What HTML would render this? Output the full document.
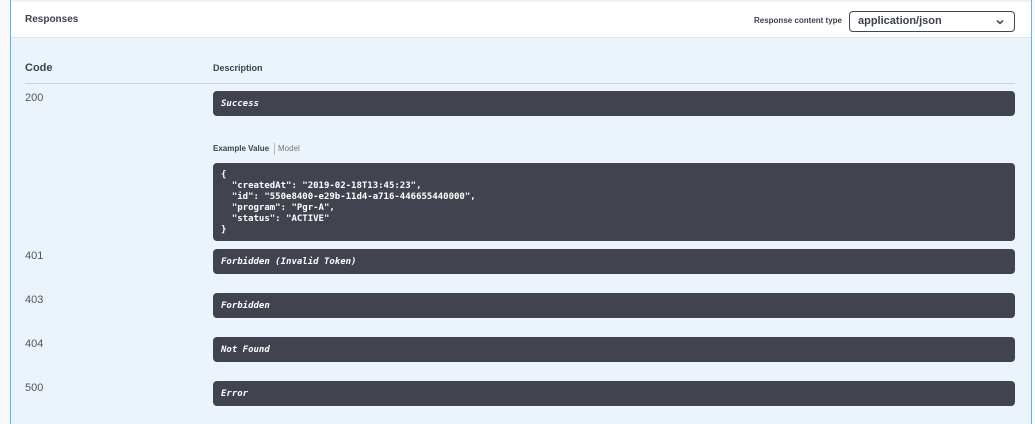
<!DOCTYPE html>
<html><head><style>
html,body{margin:0;padding:0;width:1035px;height:424px;overflow:hidden;background:#f7f8f9;font-family:"Liberation Sans",sans-serif;}
.wrap{position:absolute;left:10px;top:0;width:1020px;height:424px;background:#ebf3fb;border-left:1px solid #61affe;border-right:1px solid #61affe;}
.head{position:absolute;left:0;top:2px;width:1020px;height:35px;background:#fff;border-bottom:1px solid #d9e4ef;}
.top{position:absolute;left:0;top:0;width:1020px;height:2px;background:#eef3f8;}
.t{position:absolute;color:#3b4151;}
.dark{position:absolute;left:202px;width:802px;background:#41444e;border-radius:4px;color:#fff;font-family:"DejaVu Sans Mono","Liberation Mono",monospace;font-weight:bold;font-style:italic;font-size:9px;}
.dark span{position:absolute;left:8px;top:8px;}
.code{font-style:normal;}
.sel{position:absolute;left:838px;top:9px;width:166px;height:21px;border:1.5px solid #41444e;border-radius:4px;background:#fff;box-sizing:border-box;}
</style></head><body>
<div class="wrap">
<div class="top"></div>
<div class="head">
<div class="t" style="left:14px;top:12px;font-size:10px;font-weight:bold;">Responses</div>
<div class="t" style="right:189px;top:14px;font-size:8px;font-weight:bold;white-space:nowrap;">Response content type</div>
<div class="sel"><div class="t" style="left:8px;top:3px;font-size:11px;font-weight:bold;">application/json</div>
<svg style="position:absolute;left:146px;top:7px" width="8" height="6"><path d="M1 1.5L4 4.5L7 1.5" stroke="#3b4151" stroke-width="1.5" fill="none"/></svg></div>
</div>
<div class="t" style="left:14px;top:62px;font-size:11px;font-weight:bold;">Code</div>
<div class="t" style="left:202px;top:63px;font-size:9px;font-weight:bold;">Description</div>
<div style="position:absolute;left:14px;top:83px;width:990px;height:1px;background:#c9d6e3;"></div>
<div class="t" style="left:14px;top:92px;font-size:11px;color:#555;">200</div>
<div class="dark" style="top:91px;height:25px;"><span>Success</span></div>
<div class="t" style="left:202px;top:144px;font-size:8px;font-weight:bold;">Example Value</div>
<div style="position:absolute;left:263px;top:143px;width:1px;height:12px;background:#bbb;"></div>
<div class="t" style="left:267px;top:144px;font-size:8px;color:#777;">Model</div>
<div class="dark code" style="top:163px;height:78px;"><pre style="margin:0;position:absolute;left:8px;top:7px;font:bold 9px/11px 'DejaVu Sans Mono',monospace;">{
  "createdAt": "2019-02-18T13:45:23",
  "id": "550e8400-e29b-11d4-a716-446655440000",
  "program": "Pgr-A",
  "status": "ACTIVE"
}</pre></div>
<div class="t" style="left:14px;top:250px;font-size:11px;color:#555;">401</div>
<div class="dark" style="top:249px;height:25px;"><span>Forbidden (Invalid Token)</span></div>
<div class="t" style="left:14px;top:294px;font-size:11px;color:#555;">403</div>
<div class="dark" style="top:293px;height:25px;"><span>Forbidden</span></div>
<div class="t" style="left:14px;top:338px;font-size:11px;color:#555;">404</div>
<div class="dark" style="top:337px;height:25px;"><span>Not Found</span></div>
<div class="t" style="left:14px;top:382px;font-size:11px;color:#555;">500</div>
<div class="dark" style="top:381px;height:25px;"><span>Error</span></div>
</div>
</body></html>
